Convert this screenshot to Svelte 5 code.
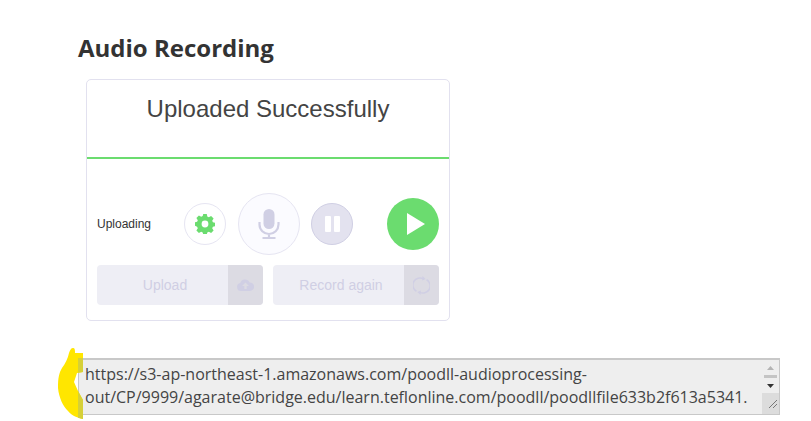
<script>
  const url = ['https://s3-ap-northeast-1.amazonaws.com/poodll-audioprocessing-', 'out/CP/9999/agarate@bridge.edu/learn.teflonline.com/poodll/poodllfile633b2f613a5341.'];
  const blob = 'M15 0C17 0 17 2 17 5L25 5 25 24 19 25 16 34 20 43 25 52 25 71C20 70 14 68 10 63 5 58 1 50 0 40 0 30 1 25 4 20 7 16 10 10 11 5 12 2 13 0 15 0z';
</script>

<div class="page">
  <h2>Audio Recording</h2>

  <div class="recorder">
    <div class="status">Uploaded Successfully</div>

    <div class="controls">
      <span class="label">Uploading</span>
      <span class="btn small">
        <svg width="20" height="20" viewBox="0 0 20 20">
          <path fill="#6bdc6f" fill-rule="evenodd" d="M8.2 0h3.6l.5 2.6 1.500.7 2.300-1.400 2.500 2.500-1.400 2.300.7 1.500 2.100.5v3.600l-2.100.5-.7 1.500 1.400 2.300-2.500 2.500-2.300-1.400-1.500.7-.5 2.100H8.200l-.5-2.100-1.500-.7-2.300 1.400-2.500-2.500 1.400-2.300-.7-1.500L0 11.800V8.200l2.100-.5.7-1.500-1.400-2.300 2.500-2.500 2.300 1.400 1.500-.7zM10 6.600a3.400 3.400 0 1 0 0 6.800 3.400 3.400 0 0 0 0-6.800z"/>
        </svg>
      </span>
      <span class="btn mic">
        <svg width="22" height="30" viewBox="0 0 22 30" fill="none">
          <rect x="5.500" y="0" width="11" height="20" rx="5.500" fill="#d0cfe4"/>
          <path d="M1.500 13v2.500a9.500 9.500 0 0 0 19 0V13M11 25v3.500M4.500 29h13" stroke="#d0cfe4" stroke-width="2.200"/>
        </svg>
      </span>
      <span class="btn pause"><i></i><i></i></span>
      <span class="btn play">
        <svg width="20" height="22" viewBox="0 0 20 22"><path fill="#fff" d="M0 0l18 11L0 22z"/></svg>
      </span>
    </div>

    <div class="actions">
      <div class="action">
        <span class="caption">Upload</span>
        <span class="side">
          <svg width="17" height="12" viewBox="0 0 17 12">
            <path fill="#d0cfe4" fill-rule="evenodd" d="M4 12a4 4 0 0 1-.8-7.900A5 5 0 0 1 12.600 3.400 4.300 4.300 0 0 1 13 12zM8.500 3.500L5 7h2.300v3h2.400V7H12z"/>
          </svg>
        </span>
      </div>
      <div class="action">
        <span class="caption">Record again</span>
        <span class="side">
          <svg width="17" height="19" viewBox="0 0 17 19" fill="none" stroke="#d0cfe4" stroke-width="1.600">
            <path d="M3.400 15.200A7 7 0 0 1 10.500 2.900M13.600 3.800A7 7 0 0 1 6.500 16.100"/>
            <path fill="#d0cfe4" stroke="none" d="M9.500 0l3.200 3-3.600 1.600zM7.500 19l-3.200-3 3.600-1.600z"/>
          </svg>
        </span>
      </div>
    </div>
  </div>

  <div class="output">
    <div class="url">
      {#each url as line}<div>{line}</div>{/each}
    </div>
    <div class="scroll">
      <div class="track">
        <svg width="17" height="40" viewBox="0 0 17 40">
          <path fill="#b4b4b4" d="M5 12l3.500-4 3.500 4z"/>
          <rect x="2" y="17" width="13" height="3" fill="#c4c4c4"/>
          <path fill="#333" d="M5 26h7l-3.500 4z"/>
        </svg>
      </div>
      <div class="grip">
        <svg width="17" height="17" viewBox="0 0 17 17" stroke="#777" stroke-width="1"><path d="M7 15l8-8M11 15l4-4"/></svg>
      </div>
    </div>
    <svg class="marker" width="26" height="71" viewBox="0 0 26 71">
      <defs><clipPath id="over-box"><rect x="20" y="10" width="6" height="61"/></clipPath></defs>
      <path fill="#ffe600" d={blob}/>
      <path fill="#d6d038" clip-path="url(#over-box)" d={blob}/>
    </svg>
  </div>
</div>

<style>
  :global(body) {
    background: #fff;
  }
  .page {
    width: 811px;
    height: 421px;
    box-sizing: border-box;
    padding: 32px 31px 0 78px;
    overflow: hidden;
  }
  h2 {
    margin: 0 0 15px;
    font: 700 24px/32px "Open Sans", sans-serif;
    color: #333;
  }
  .recorder {
    width: 364px;
    height: 242px;
    box-sizing: border-box;
    margin-left: 8px;
    border: 1px solid #e2e1ef;
    border-radius: 5px;
    font-family: "Liberation Sans", Arial, sans-serif;
  }
  .status {
    height: 79px;
    box-sizing: border-box;
    padding-top: 14px;
    border-bottom: 2px solid #6bdc6f;
    text-align: center;
    font-size: 24px;
    line-height: 30px;
    color: #444;
  }
  .controls {
    display: flex;
    align-items: center;
    height: 62px;
    margin-top: 34px;
    padding: 0 10px;
  }
  .label {
    width: 87px;
    font-size: 12px;
    color: #333;
  }
  .btn {
    display: flex;
    align-items: center;
    justify-content: center;
    box-sizing: border-box;
    border-radius: 50%;
    flex: none;
  }
  .small {
    width: 42px;
    height: 42px;
    border: 1px solid #e6e5f2;
  }
  .mic {
    width: 62px;
    height: 62px;
    margin-left: 12px;
    border: 1px solid #e6e5f2;
    background: #fbfbff;
  }
  .pause {
    width: 42px;
    height: 42px;
    margin-left: 11px;
    gap: 3px;
    border: 1px solid #d0cfe4;
    background: #e3e2ef;
  }
  .pause i {
    width: 6px;
    height: 16px;
    border-radius: 1px;
    background: #fff;
  }
  .play {
    width: 52px;
    height: 52px;
    margin-left: 34px;
    padding-left: 8px;
    background: #6bdc6f;
  }
  .actions {
    display: flex;
    gap: 10px;
    margin-top: 10px;
    padding: 0 10px;
  }
  .action {
    display: flex;
    width: 166px;
    height: 40px;
    overflow: hidden;
    border-radius: 4px;
    background: #eeeef5;
    color: #d0cfe4;
    font-size: 14px;
  }
  .caption {
    flex: 1;
    align-self: center;
    padding-left: 5px;
    text-align: center;
  }
  .side {
    display: flex;
    align-items: center;
    justify-content: center;
    width: 35px;
    background: #dcdbe3;
  }
  .output {
    position: relative;
    display: flex;
    height: 57px;
    box-sizing: border-box;
    margin-top: 37px;
    border: 1px solid #c8c8c8;
    border-top-width: 2px;
    background: #eee;
  }
  .url {
    flex: 1;
    padding: 3px 0 0 6px;
    font: 16px/23px "Open Sans", sans-serif;
    color: #444;
    white-space: nowrap;
  }
  .scroll {
    display: flex;
    flex-direction: column;
    width: 17px;
  }
  .track {
    height: 36px;
    overflow: hidden;
  }
  .track svg {
    display: block;
    margin-top: -2px;
  }
  .grip {
    flex: 1;
    background: #dcdcdc;
  }
  .marker {
    position: absolute;
    left: -21px;
    top: -12px;
  }
</style>
